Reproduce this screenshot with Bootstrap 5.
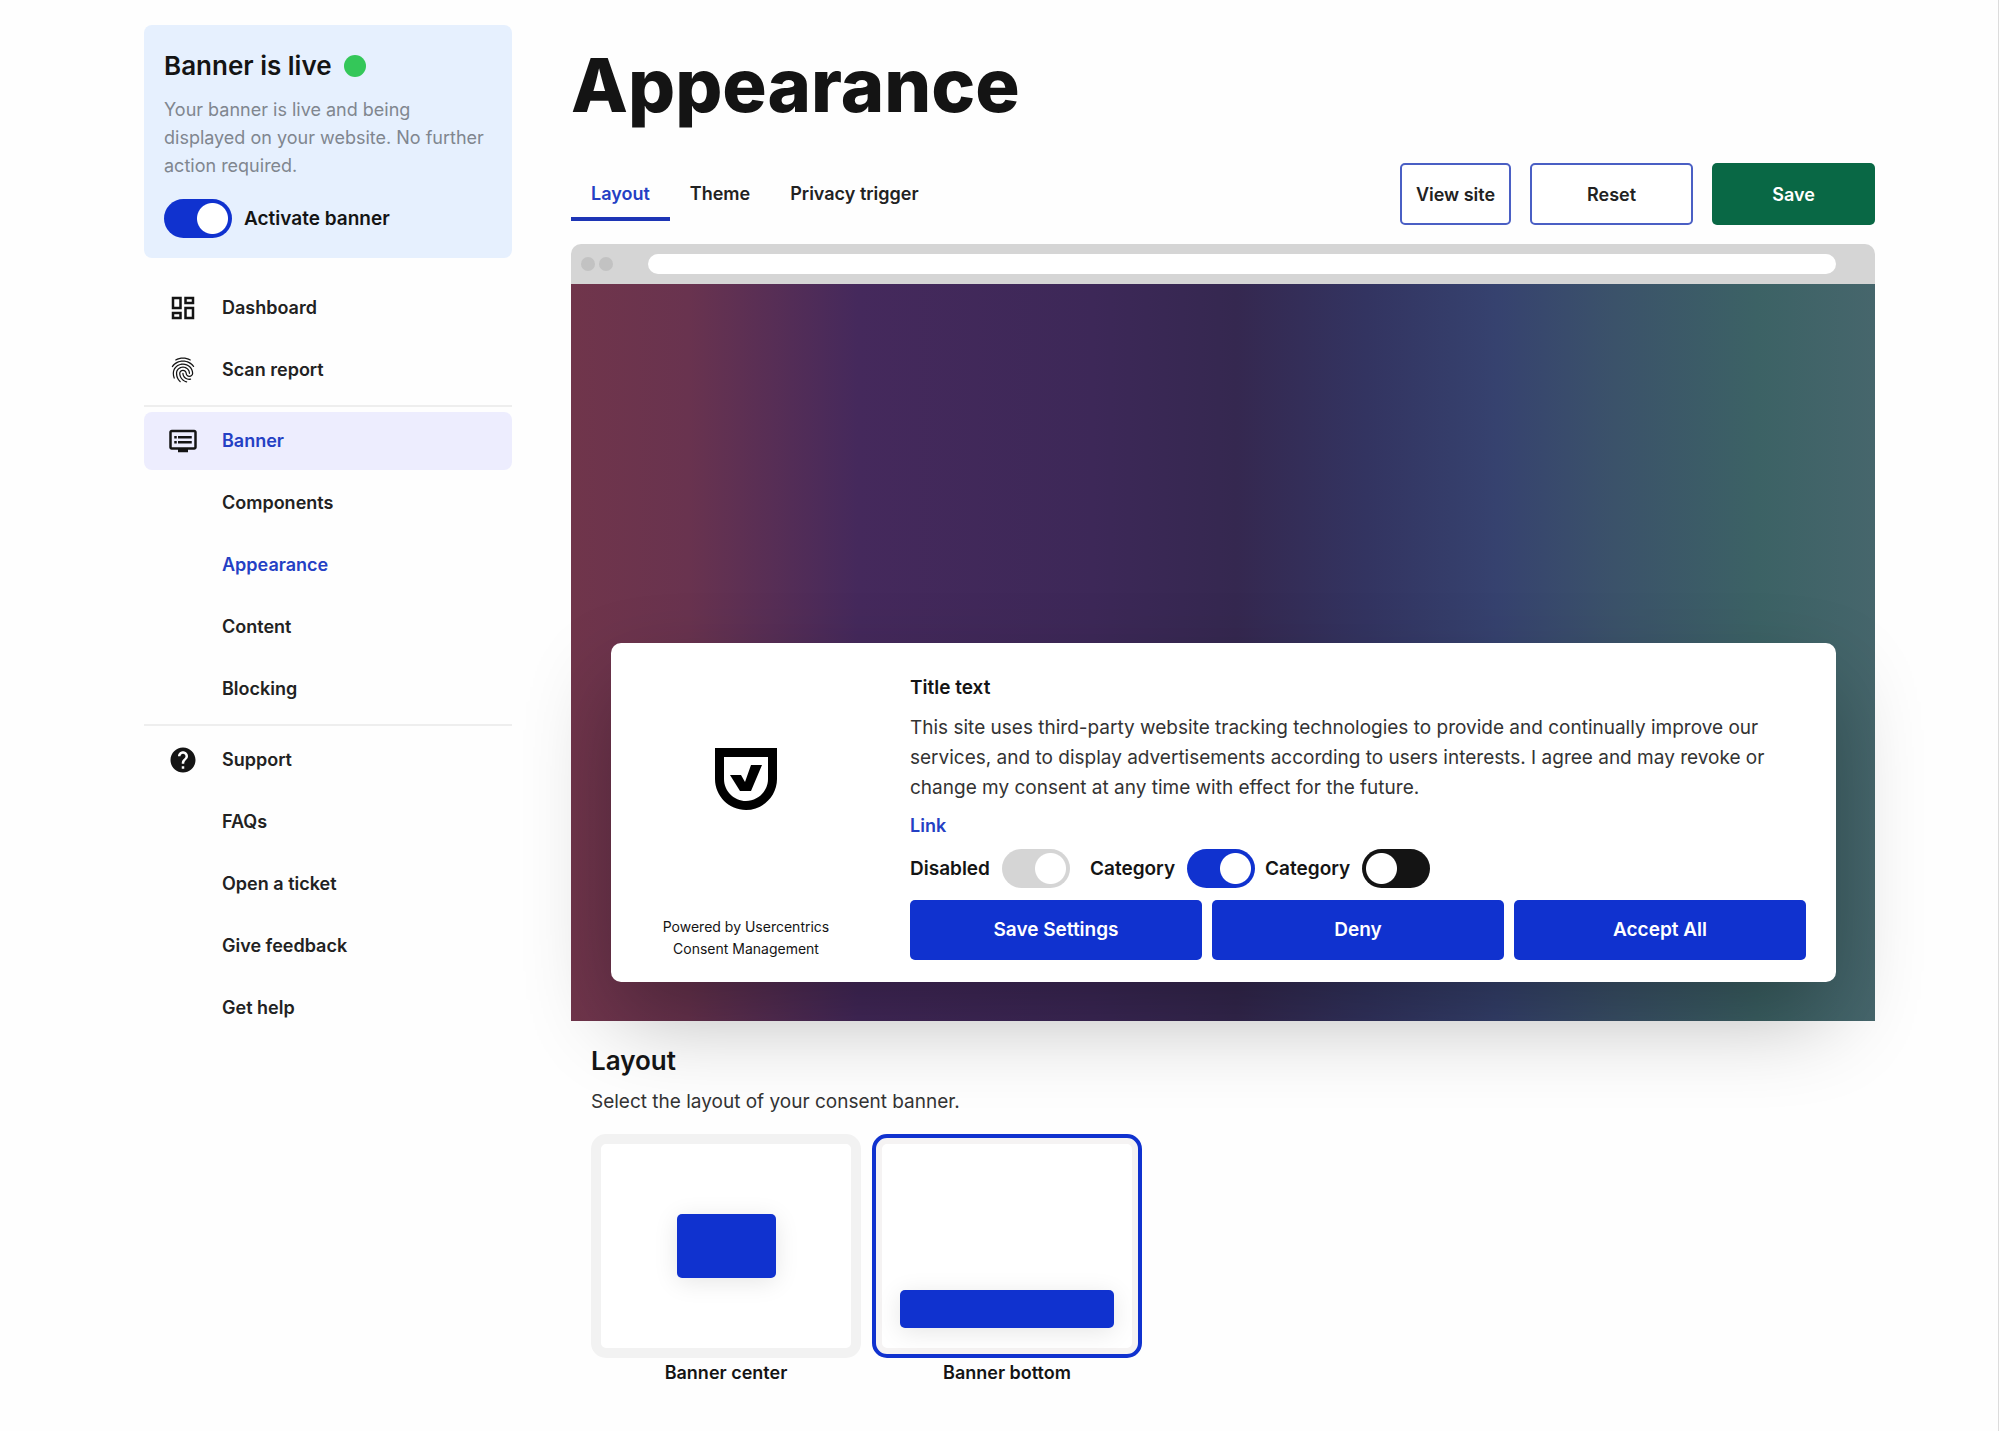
<!DOCTYPE html>
<html lang="en">
<head>
<meta charset="utf-8">
<meta name="viewport" content="width=device-width, initial-scale=1">
<title>Appearance</title>
<link href="https://cdn.jsdelivr.net/npm/bootstrap@5.3.0/dist/css/bootstrap.min.css" rel="stylesheet">
<style>
  :root { --brand: #1032cf; --ink: #141414; }
  body { font-family: Inter, "Liberation Sans", sans-serif; font-size: 18px; line-height: 28px; color: var(--ink); background: #fefefe; }
  .page { padding: 25px 123px 0 144px; gap: 59px; border-right: 1px solid #dcdcdc; }
  .side { flex: 0 0 368px; }
  .status { background: #e6f0fe; border-radius: 8px; padding: 23px 20px 20px; }
  .status h2 { font-size: 26px; line-height: 36px; gap: 12px; margin-bottom: 12px; }
  .status p { color: #80868f; margin-bottom: 19px; }
  .live-dot { width: 22px; height: 22px; background: #34c759; }

  .toggle { min-height: 0; padding: 0; margin: 0; gap: 12px; font-size: 19px; }
  .toggle .form-check-input, .toggle .form-check-input:focus {
    width: 68px; height: 39px; margin: 0; border: 0; border-radius: 20px; float: none; flex: none; box-shadow: none;
    background-color: #141414; opacity: 1;
    background-image: radial-gradient(circle, #fff 15px, transparent 16px);
    background-size: 39px 39px; background-repeat: no-repeat; background-position: left center;
  }
  .toggle .form-check-input:checked { background-color: var(--brand); background-position: right center; }
  .toggle .form-check-input:disabled { background-color: #d5d5d5; }
  .toggle .form-check-label, .toggle .form-check-input:disabled ~ .form-check-label { opacity: 1; }

  .menu { gap: 4px; margin-top: 21px; }
  .menu .nav-link { display: flex; align-items: center; gap: 24px; height: 58px; padding: 0 24px; border-radius: 8px; color: #222; font-weight: 600; }
  .menu .nav-link svg { width: 30px; height: 30px; flex: none; fill: #141414; }
  .menu .sub { padding-left: 78px; }
  .menu .nav-link.on { background: #ededfe; }
  .menu .nav-link.on, .menu .nav-link.current { color: #2440c4; }
  .menu hr { height: 2px; margin: 2px 0 1px; border: 0; background: #eeeeee; opacity: 1; }

  h1 { font-size: 74px; line-height: 90px; font-weight: 800; margin: 15px 0 33px; }
  .tabs .nav-link { padding: 17px 20px 9px; color: #222; font-weight: 600; border-bottom: 4px solid transparent; }
  .tabs .nav-link.active { color: #2440c4; border-color: #1d35b5; }
  .page-actions { gap: 19px; }
  .act { width: 163px; height: 62px; border-radius: 5px; font-size: 18px; font-weight: 600; padding: 0; }
  .act-line, .act-line:hover { border: 2px solid #4a5fc4; color: #222; background: #fff; }
  .act-narrow { width: 111px; }
  .act-save, .act-save:hover { background: #096845; color: #fff; }

  .chrome { height: 40px; margin-top: 19px; padding: 0 39px 0 10px; background: #d5d5d5; border-radius: 10px 10px 0 0; }
  .chrome-dot { width: 14px; height: 14px; background: #c2c2c2; margin-right: 4px; }
  .chrome-url { height: 20px; border-radius: 10px; background: #fff; margin-left: 31px; }
  .preview { padding: 359px 39px 39px 40px;
    background: linear-gradient(90deg, #70354b 0%, #69334f 9%, #45295c 22%, #3d2858 40%, #352850 51%, #333461 61%, #36426f 71%, #3b526a 80%, #3c6265 91%, #46666c 100%); }
  .consent { background: #fff; border-radius: 10px; padding: 31px 30px 22px 0; box-shadow: 0 38px 90px -6px rgba(0,0,0,.3); gap: 29px; }
  .consent-brand { flex: 0 0 270px; }
  .consent-brand svg { width: 62px; height: 62px; margin-top: 74px; }
  .powered { font-size: 14px; line-height: 22px; }
  .consent-title { font-size: 19px; }
  .consent-copy { line-height: 30px; color: #333; margin: 11px 0 9px; }
  .consent-copy, .section-note { font-size: 19px; }
  .consent a { color: #2440c4; line-height: 28px; }
  .consent-toggles { margin-top: 9px; }
  .consent-toggles .toggle + .toggle { margin-left: 20px; }
  .consent-toggles .toggle + .toggle + .toggle { margin-left: 10px; }
  .consent .act, .consent .act:hover { height: 60px; font-size: 19px; background: var(--brand); color: #fff; }
  .consent-actions { gap: 10px; margin-top: 12px; }

  .section { padding: 24px 20px; position: relative; }
  .section h2 { font-size: 26px; line-height: 32px; margin-bottom: 11px; }
  .section-note { color: #333; margin-bottom: 18px; }
  .choices { gap: 11px; }
  .choice { width: 270px; cursor: pointer; line-height: 30px; }
  .choice-frame { height: 224px; border-radius: 15px; border: 10px solid #f2f2f2; background: #fff; padding: 20px 18px; }
  .btn-check:checked + .choice .choice-frame { border: 4px solid var(--brand); box-shadow: inset 0 0 0 6px #f5f3f3; padding: 26px 24px; }
  .shape { background: var(--brand); border-radius: 5px; box-shadow: 0 4px 24px rgba(0,0,0,.1); }
  .shape-box { width: 99px; height: 64px; }
  .shape-bar { width: 100%; height: 38px; }
</style>
</head>
<body>
<div class="page d-flex align-items-start min-vh-100">
  <aside class="side">
    <section class="status">
      <h2 class="d-flex align-items-center fw-semibold">Banner is live <span class="live-dot rounded-circle"></span></h2>
      <p>Your banner is live and being displayed on your website. No further action required.</p>
      <div class="form-check form-switch toggle d-flex align-items-center">
        <input class="form-check-input" type="checkbox" role="switch" id="activate" checked>
        <label class="form-check-label fw-semibold" for="activate">Activate banner</label>
      </div>
    </section>
    <nav class="menu nav flex-column flex-nowrap">
      <a class="nav-link" href="#"><svg viewBox="0 0 24 24"><path d="M19 5v2h-4V5h4M9 5v6H5V5h4m10 8v6h-4v-6h4M9 17v2H5v-2h4M21 3h-8v6h8V3zM11 3H3v10h8V3zm10 8h-8v10h8V11zm-10 4H3v6h8v-6z"/></svg>Dashboard</a>
      <a class="nav-link" href="#"><svg viewBox="0 0 24 24"><path d="M17.81 4.47c-.08 0-.16-.02-.23-.06C15.66 3.42 14 3 12.01 3c-1.98 0-3.86.47-5.57 1.41-.24.13-.54.04-.68-.2-.13-.24-.04-.55.2-.68C7.82 2.52 9.86 2 12.01 2c2.13 0 3.99.47 6.03 1.52.25.13.34.43.21.67-.09.18-.26.28-.44.28zM3.5 9.72c-.1 0-.2-.03-.29-.09-.23-.16-.28-.47-.12-.7.99-1.4 2.25-2.5 3.75-3.27C9.98 4.04 14 4.03 17.15 5.65c1.5.77 2.76 1.86 3.75 3.25.16.22.11.54-.12.7-.23.16-.54.11-.7-.12-.9-1.26-2.04-2.25-3.39-2.94-2.87-1.47-6.54-1.47-9.4.01-1.36.7-2.5 1.7-3.4 2.96-.08.14-.23.21-.39.21zm6.25 12.07c-.13 0-.26-.05-.35-.15-.87-.87-1.34-1.43-2.01-2.64-.69-1.23-1.05-2.73-1.05-4.34 0-2.97 2.54-5.39 5.66-5.39s5.66 2.42 5.66 5.39c0 .28-.22.5-.5.5s-.5-.22-.5-.5c0-2.42-2.09-4.39-4.66-4.39-2.57 0-4.66 1.97-4.66 4.39 0 1.44.32 2.77.93 3.85.64 1.15 1.08 1.64 1.85 2.42.19.2.19.51 0 .71-.11.1-.24.15-.37.15zm7.17-1.85c-1.19 0-2.24-.3-3.1-.89-1.49-1.01-2.38-2.65-2.38-4.39 0-.28.22-.5.5-.5s.5.22.5.5c0 1.41.72 2.74 1.94 3.56.71.48 1.54.71 2.54.71.24 0 .64-.03 1.04-.1.27-.05.53.13.58.41.05.27-.13.53-.41.58-.57.11-1.07.12-1.21.12zM14.91 22c-.04 0-.09-.01-.13-.02-1.59-.44-2.63-1.03-3.72-2.1-1.4-1.39-2.17-3.24-2.17-5.22 0-1.62 1.38-2.94 3.08-2.94 1.7 0 3.08 1.32 3.08 2.94 0 1.07.93 1.94 2.08 1.94s2.08-.87 2.08-1.94c0-3.77-3.25-6.83-7.25-6.83-2.84 0-5.44 1.58-6.61 4.03-.39.81-.59 1.76-.59 2.8 0 .78.07 2.01.67 3.61.1.26-.03.55-.29.64-.26.1-.55-.04-.64-.29-.49-1.31-.73-2.61-.73-3.96 0-1.2.23-2.29.68-3.24 1.33-2.79 4.28-4.6 7.51-4.6 4.55 0 8.25 3.51 8.25 7.83 0 1.62-1.38 2.94-3.08 2.94s-3.08-1.32-3.08-2.94c0-1.07-.93-1.94-2.08-1.94s-2.08.87-2.08 1.94c0 1.71.66 3.31 1.87 4.51.95.94 1.86 1.46 3.27 1.85.27.07.42.35.35.61-.05.23-.26.38-.47.38z"/></svg>Scan report</a>
      <hr>
      <a class="nav-link on" href="#"><svg viewBox="0 0 24 24"><path d="M21 3H3c-1.100 0-2 .9-2 2v12c0 1.100.9 2 2 2h5v2h8v-2h5c1.100 0 1.990-.9 1.990-2L23 5c0-1.100-.9-2-2-2zm0 14H3V5h18v12zM19 8H8v2h11V8zm0 4H8v2h11v-2zM7 8H5v2h2V8zm0 4H5v2h2v-2z"/></svg>Banner</a>
      <a class="nav-link sub" href="#">Components</a>
      <a class="nav-link sub current" href="#">Appearance</a>
      <a class="nav-link sub" href="#">Content</a>
      <a class="nav-link sub" href="#">Blocking</a>
      <hr>
      <a class="nav-link" href="#"><svg viewBox="0 0 24 24"><path d="M12 2C6.480 2 2 6.480 2 12s4.480 10 10 10 10-4.480 10-10S17.520 2 12 2zm1 17h-2v-2h2v2zm2.070-7.750l-.9.920C13.450 12.900 13 13.500 13 15h-2v-.5c0-1.100.45-2.100 1.170-2.830l1.240-1.260c.37-.36.59-.86.59-1.410 0-1.100-.9-2-2-2s-2 .9-2 2H8c0-2.210 1.790-4 4-4s4 1.790 4 4c0 .88-.36 1.680-.93 2.250z"/></svg>Support</a>
      <a class="nav-link sub" href="#">FAQs</a>
      <a class="nav-link sub" href="#">Open a ticket</a>
      <a class="nav-link sub" href="#">Give feedback</a>
      <a class="nav-link sub" href="#">Get help</a>
    </nav>
  </aside>

  <main class="flex-grow-1">
    <h1>Appearance</h1>
    <div class="d-flex justify-content-between align-items-start">
      <nav class="tabs nav">
        <a class="nav-link active" href="#">Layout</a>
        <a class="nav-link" href="#">Theme</a>
        <a class="nav-link" href="#">Privacy trigger</a>
      </nav>
      <div class="page-actions d-flex">
        <button type="button" class="btn act act-line act-narrow">View site</button>
        <button type="button" class="btn act act-line">Reset</button>
        <button type="button" class="btn act act-save">Save</button>
      </div>
    </div>

    <div class="chrome d-flex align-items-center">
      <span class="chrome-dot rounded-circle"></span>
      <span class="chrome-dot rounded-circle"></span>
      <div class="chrome-url flex-grow-1"></div>
    </div>
    <div class="preview">
      <div class="consent d-flex">
        <div class="consent-brand d-flex flex-column align-items-center justify-content-between">
          <svg viewBox="0 0 62 62"><path fill-rule="evenodd" d="M0 0H62V31C62 48 48 62 31 62S0 48 0 31ZM9 9V31C9 43 19 53 31 53S53 43 53 31V9Z"/><path d="M15 27H26L30 34L36 17H47L36 43H25Z"/></svg>
          <div class="powered text-center">Powered by Usercentrics<br>Consent Management</div>
        </div>
        <div class="flex-grow-1">
          <div class="consent-title fw-semibold">Title text</div>
          <p class="consent-copy">This site uses third-party website tracking technologies to provide and continually improve our services, and to display advertisements according to users interests. I agree and may revoke or change my consent at any time with effect for the future.</p>
          <a class="fw-semibold text-decoration-none d-block" href="#">Link</a>
          <div class="consent-toggles d-flex">
            <div class="form-check form-switch toggle d-flex flex-row-reverse align-items-center">
              <input class="form-check-input" type="checkbox" role="switch" id="cat0" checked disabled>
              <label class="form-check-label fw-semibold" for="cat0">Disabled</label>
            </div>
            <div class="form-check form-switch toggle d-flex flex-row-reverse align-items-center">
              <input class="form-check-input" type="checkbox" role="switch" id="cat1" checked>
              <label class="form-check-label fw-semibold" for="cat1">Category</label>
            </div>
            <div class="form-check form-switch toggle d-flex flex-row-reverse align-items-center">
              <input class="form-check-input" type="checkbox" role="switch" id="cat2">
              <label class="form-check-label fw-semibold" for="cat2">Category</label>
            </div>
          </div>
          <div class="consent-actions d-flex">
            <button type="button" class="btn act flex-fill">Save Settings</button>
            <button type="button" class="btn act flex-fill">Deny</button>
            <button type="button" class="btn act flex-fill">Accept All</button>
          </div>
        </div>
      </div>
    </div>

    <section class="section">
      <h2 class="fw-semibold">Layout</h2>
      <p class="section-note">Select the layout of your consent banner.</p>
      <div class="choices d-flex">
        <input class="btn-check" type="radio" name="layout" id="center">
        <label class="choice" for="center">
          <span class="choice-frame d-flex align-items-center justify-content-center"><span class="shape shape-box"></span></span>
          <span class="d-block text-center fw-semibold">Banner center</span>
        </label>
        <input class="btn-check" type="radio" name="layout" id="bottom" checked>
        <label class="choice" for="bottom">
          <span class="choice-frame d-flex align-items-end"><span class="shape shape-bar"></span></span>
          <span class="d-block text-center fw-semibold">Banner bottom</span>
        </label>
      </div>
    </section>
  </main>
</div>
<script src="https://cdn.jsdelivr.net/npm/bootstrap@5.3.0/dist/js/bootstrap.bundle.min.js"></script>
</body>
</html>
